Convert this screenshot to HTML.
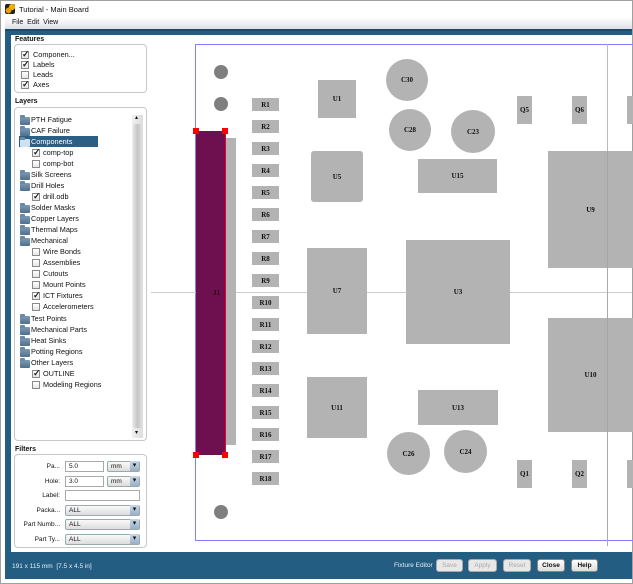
<!DOCTYPE html>
<html><head><style>
*{box-sizing:border-box;margin:0;padding:0}
body{width:633px;height:584px;overflow:hidden;background:#fff;font-family:"Liberation Sans",sans-serif;font-size:7px;color:#111;position:relative}
.a{position:absolute}
.grp{position:absolute;border:1px solid #c8c8c8;border-radius:4px;background:#fff}
.lbl{position:absolute;font-weight:bold;font-size:7px}
.cb{position:absolute;width:8px;height:8px;border:1px solid #8a8a8a;background:linear-gradient(#fff,#e6e6e6)}
.cb.on::after{content:"✓";position:absolute;left:0;top:-3px;font-size:9px;font-weight:bold;color:#222}
.t{position:absolute;font-size:7.3px;white-space:nowrap}
.fold{position:absolute;width:10px;height:8px;background:linear-gradient(#7d9bb5,#4f6f8c);border-radius:1px}
.fold::before{content:"";position:absolute;left:0;top:-2px;width:5px;height:3px;background:#6b89a4;border-radius:1px 1px 0 0}
.p{position:absolute;background:#b3b3b3;font-family:"Liberation Serif",serif;font-weight:bold;font-size:7px;display:flex;align-items:center;justify-content:center;color:#111}
.c{border-radius:50%}
.dot{position:absolute;width:14px;height:14px;border-radius:50%;background:#7f7f7f}
.h{position:absolute;width:6px;height:6px;background:#f00}
.in{position:absolute;height:11px;border:1px solid #aaa;background:#fff;font-size:6.5px;padding-left:3px;line-height:9px}
.dd{position:absolute;height:11px;border:1px solid #9aa;border-radius:2px;background:linear-gradient(#fafafa,#dcdcdc);font-size:6.5px;padding-left:3px;line-height:9px}
.dd::after{content:"▾";position:absolute;right:0;top:-1px;width:9px;height:10px;background:linear-gradient(#c8d8e8,#98b0c8);font-size:7px;text-align:center;line-height:10px}
.fl{position:absolute;font-size:6.5px;text-align:right;width:50px}
.btn{position:absolute;top:559px;height:13px;border:1px solid #888;border-radius:3px;background:linear-gradient(#fff,#ddd);font-size:6.5px;text-align:center;line-height:11px;font-weight:bold}
.btn.dis{color:#aaa;border-color:#aaa;background:#e8e8e8;font-weight:normal}
</style></head><body>
<div class="a" style="left:0;top:0;width:633px;height:584px;border:1px solid #a0a0a0"></div>
<div class="a" style="left:5px;top:4px;width:10px;height:10px;background:radial-gradient(circle at 35% 65%,#e8a000 0 30%,transparent 32%),radial-gradient(circle at 70% 30%,#f0b000 0 30%,transparent 32%),#222;border-radius:2px"></div>
<div class="t" style="left:19px;top:5px;font-size:7.5px">Tutorial - Main Board</div>
<div class="a" style="left:5px;top:17px;width:627px;height:12px;background:linear-gradient(#fff,#f0f0f4 50%,#dcdde6)"></div>
<div class="t" style="left:12px;top:19px;font-size:7px">File&nbsp; Edit&nbsp; View</div>
<div class="a" style="left:5px;top:29px;width:627px;height:550px;background:#245d82"></div>
<div class="a" style="left:5px;top:29px;width:627px;height:2px;background:#1b4c6c"></div>
<div class="a" style="left:11px;top:35px;width:140px;height:517px;background:#fff"></div>
<div class="a" style="left:151px;top:35px;width:481px;height:517px;background:#fff"></div>

<div class="lbl" style="left:15px;top:36px">Features</div>
<div class="grp" style="left:14px;top:44px;width:133px;height:49px"></div>
<div class="cb on" style="left:21px;top:51px"></div><div class="t" style="left:33px;top:50px">Componen...</div>
<div class="cb on" style="left:21px;top:61px"></div><div class="t" style="left:33px;top:60px">Labels</div>
<div class="cb" style="left:21px;top:71px"></div><div class="t" style="left:33px;top:70px">Leads</div>
<div class="cb on" style="left:21px;top:81px"></div><div class="t" style="left:33px;top:80px">Axes</div>

<div class="lbl" style="left:15px;top:98px">Layers</div>
<div class="grp" style="left:14px;top:107px;width:133px;height:334px"></div>
<div class="a" style="left:132px;top:115px;width:11px;height:323px;background:linear-gradient(90deg,#f0f0f0,#ddd)"></div>
<div class="a" style="left:133px;top:124px;width:9px;height:304px;background:linear-gradient(90deg,#e4e4e4,#c4c4c4,#e0e0e0);border-radius:2px"></div>
<div class="t" style="left:135px;top:114px;font-size:6px">▴</div>
<div class="t" style="left:135px;top:429px;font-size:6px">▾</div>
<div class="a" style="left:19px;top:136px;width:79px;height:11px;background:#2b5f85"></div>

<div class="fold" style="left:20px;top:117px"></div><div class="t" style="left:31px;top:115px">PTH Fatigue</div>
<div class="fold" style="left:20px;top:128px"></div><div class="t" style="left:31px;top:126px">CAF Failure</div>
<div class="fold" style="left:20px;top:139px;background:#cfe0ee"></div><div class="t" style="left:31px;top:137px;color:#fff">Components</div>
<div class="cb on" style="left:32px;top:149px"></div><div class="t" style="left:43px;top:148px">comp-top</div>
<div class="cb" style="left:32px;top:160px"></div><div class="t" style="left:43px;top:159px">comp-bot</div>
<div class="fold" style="left:20px;top:172px"></div><div class="t" style="left:31px;top:170px">Silk Screens</div>
<div class="fold" style="left:20px;top:183px"></div><div class="t" style="left:31px;top:181px">Drill Holes</div>
<div class="cb on" style="left:32px;top:193px"></div><div class="t" style="left:43px;top:192px">drill.odb</div>
<div class="fold" style="left:20px;top:205px"></div><div class="t" style="left:31px;top:203px">Solder Masks</div>
<div class="fold" style="left:20px;top:216px"></div><div class="t" style="left:31px;top:214px">Copper Layers</div>
<div class="fold" style="left:20px;top:227px"></div><div class="t" style="left:31px;top:225px">Thermal Maps</div>
<div class="fold" style="left:20px;top:238px"></div><div class="t" style="left:31px;top:236px">Mechanical</div>
<div class="cb" style="left:32px;top:248px"></div><div class="t" style="left:43px;top:247px">Wire Bonds</div>
<div class="cb" style="left:32px;top:259px"></div><div class="t" style="left:43px;top:258px">Assemblies</div>
<div class="cb" style="left:32px;top:270px"></div><div class="t" style="left:43px;top:269px">Cutouts</div>
<div class="cb" style="left:32px;top:281px"></div><div class="t" style="left:43px;top:280px">Mount Points</div>
<div class="cb on" style="left:32px;top:292px"></div><div class="t" style="left:43px;top:291px">ICT Fixtures</div>
<div class="cb" style="left:32px;top:303px"></div><div class="t" style="left:43px;top:302px">Accelerometers</div>
<div class="fold" style="left:20px;top:316px"></div><div class="t" style="left:31px;top:314px">Test Points</div>
<div class="fold" style="left:20px;top:327px"></div><div class="t" style="left:31px;top:325px">Mechanical Parts</div>
<div class="fold" style="left:20px;top:338px"></div><div class="t" style="left:31px;top:336px">Heat Sinks</div>
<div class="fold" style="left:20px;top:349px"></div><div class="t" style="left:31px;top:347px">Potting Regions</div>
<div class="fold" style="left:20px;top:360px"></div><div class="t" style="left:31px;top:358px">Other Layers</div>
<div class="cb on" style="left:32px;top:370px"></div><div class="t" style="left:43px;top:369px">OUTLINE</div>
<div class="cb" style="left:32px;top:381px"></div><div class="t" style="left:43px;top:380px">Modeling Regions</div>

<div class="lbl" style="left:15px;top:446px">Filters</div>
<div class="grp" style="left:14px;top:454px;width:133px;height:94px"></div>
<div class="fl" style="left:10px;top:463px">Pa...</div><div class="in" style="left:65px;top:461px;width:39px">5.0</div><div class="dd" style="left:107px;top:461px;width:33px">mm</div>
<div class="fl" style="left:10px;top:478px">Hole:</div><div class="in" style="left:65px;top:476px;width:39px">3.0</div><div class="dd" style="left:107px;top:476px;width:33px">mm</div>
<div class="fl" style="left:10px;top:492px">Label:</div><div class="in" style="left:65px;top:490px;width:75px"></div>
<div class="fl" style="left:10px;top:507px">Packa...</div><div class="dd" style="left:65px;top:505px;width:75px">ALL</div>
<div class="fl" style="left:10px;top:521px">Part Numb...</div><div class="dd" style="left:65px;top:519px;width:75px">ALL</div>
<div class="fl" style="left:10px;top:536px">Part Ty...</div><div class="dd" style="left:65px;top:534px;width:75px">ALL</div>

<div class="t" style="left:12px;top:563px;color:#e6eef5;font-size:6.5px">191 x 115 mm&nbsp; [7.5 x 4.5 in]</div>
<div class="t" style="left:394px;top:562px;color:#e6eef5;font-size:6.5px">Fixture Editor</div>
<div class="btn dis" style="left:436px;width:27px">Save</div>
<div class="btn dis" style="left:468px;width:29px">Apply</div>
<div class="btn dis" style="left:503px;width:28px">Reset</div>
<div class="btn" style="left:537px;width:28px">Close</div>
<div class="btn" style="left:571px;width:27px">Help</div>

<div class="a" style="left:195px;top:44px;width:438px;height:497px;border:1px solid #7f7fff;border-right:none"></div>
<div class="a" style="left:151px;top:292px;width:481px;height:1px;background:#ccc"></div>
<div class="a" style="left:607px;top:44px;width:1px;height:502px;background:#bbb"></div>

<div class="dot" style="left:214px;top:65px"></div>
<div class="dot" style="left:214px;top:97px"></div>
<div class="dot" style="left:214px;top:505px"></div>

<div class="a" style="left:226px;top:138px;width:10px;height:307px;background:#b3b3b3"></div>
<div class="a" style="left:196px;top:131px;width:30px;height:324px;background:#6e0f4f;border-right:1px solid #e03"></div>
<div class="t" style="left:213px;top:288px;font-family:'Liberation Serif',serif;font-weight:bold;color:#300">J1</div>
<div class="h" style="left:193px;top:128px"></div><div class="h" style="left:222px;top:128px"></div>
<div class="h" style="left:193px;top:452px"></div><div class="h" style="left:222px;top:452px"></div>

<div class="p" style="left:252px;top:98px;width:27px;height:13px">R1</div>
<div class="p" style="left:252px;top:120px;width:27px;height:13px">R2</div>
<div class="p" style="left:252px;top:142px;width:27px;height:13px">R3</div>
<div class="p" style="left:252px;top:164px;width:27px;height:13px">R4</div>
<div class="p" style="left:252px;top:186px;width:27px;height:13px">R5</div>
<div class="p" style="left:252px;top:208px;width:27px;height:13px">R6</div>
<div class="p" style="left:252px;top:230px;width:27px;height:13px">R7</div>
<div class="p" style="left:252px;top:252px;width:27px;height:13px">R8</div>
<div class="p" style="left:252px;top:274px;width:27px;height:13px">R9</div>
<div class="p" style="left:252px;top:296px;width:27px;height:13px">R10</div>
<div class="p" style="left:252px;top:318px;width:27px;height:13px">R11</div>
<div class="p" style="left:252px;top:340px;width:27px;height:13px">R12</div>
<div class="p" style="left:252px;top:362px;width:27px;height:13px">R13</div>
<div class="p" style="left:252px;top:384px;width:27px;height:13px">R14</div>
<div class="p" style="left:252px;top:406px;width:27px;height:13px">R15</div>
<div class="p" style="left:252px;top:428px;width:27px;height:13px">R16</div>
<div class="p" style="left:252px;top:450px;width:27px;height:13px">R17</div>
<div class="p" style="left:252px;top:472px;width:27px;height:13px">R18</div>

<div class="p" style="left:318px;top:80px;width:38px;height:38px">U1</div>
<div class="p" style="left:311px;top:151px;width:52px;height:51px;border-radius:3px">U5</div>
<div class="p c" style="left:386px;top:59px;width:42px;height:42px">C30</div>
<div class="p c" style="left:389px;top:109px;width:42px;height:42px">C28</div>
<div class="p c" style="left:451px;top:110px;width:44px;height:43px">C23</div>
<div class="p" style="left:418px;top:159px;width:79px;height:34px">U15</div>
<div class="p" style="left:517px;top:96px;width:15px;height:28px">Q5</div>
<div class="p" style="left:572px;top:96px;width:15px;height:28px">Q6</div>
<div class="p" style="left:627px;top:96px;width:6px;height:28px"></div>
<div class="p" style="left:548px;top:151px;width:85px;height:117px">U9</div>
<div class="p" style="left:307px;top:248px;width:60px;height:86px">U7</div>
<div class="p" style="left:406px;top:240px;width:104px;height:104px">U3</div>
<div class="p" style="left:548px;top:318px;width:85px;height:114px">U10</div>
<div class="p" style="left:307px;top:377px;width:60px;height:61px">U11</div>
<div class="p" style="left:418px;top:390px;width:80px;height:35px">U13</div>
<div class="p c" style="left:387px;top:432px;width:43px;height:43px">C26</div>
<div class="p c" style="left:444px;top:430px;width:43px;height:43px">C24</div>
<div class="p" style="left:517px;top:460px;width:15px;height:28px">Q1</div>
<div class="p" style="left:572px;top:460px;width:15px;height:28px">Q2</div>
<div class="p" style="left:627px;top:460px;width:6px;height:28px"></div>
<div class="a" style="left:607px;top:151px;width:1px;height:395px;background:#999;opacity:.5"></div>
</body></html>
